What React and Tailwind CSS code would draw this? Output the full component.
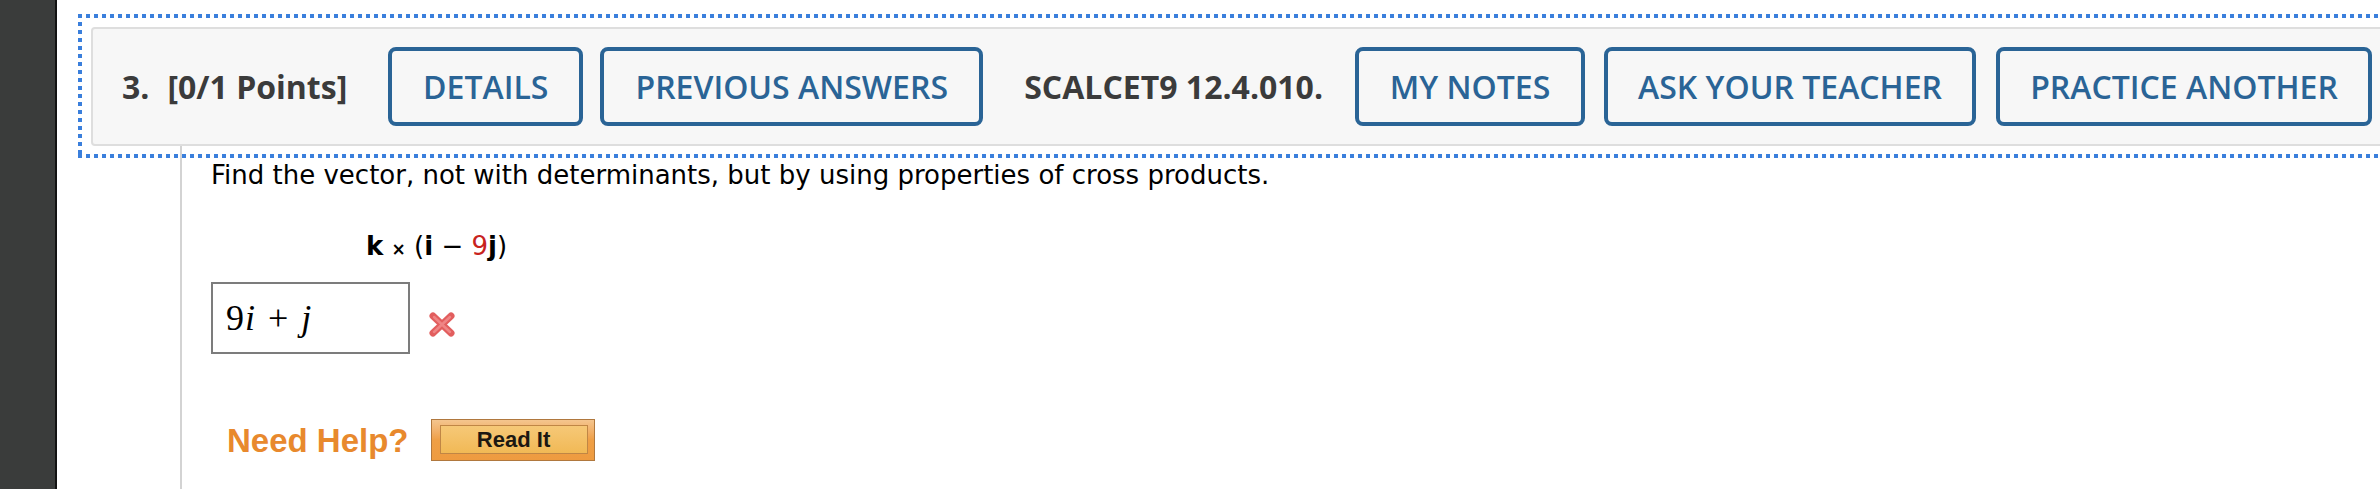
import React from 'react';

const HeaderButton = ({ label, className }) => (
  <button
    type="button"
    className={`h-[79px] shrink-0 rounded-[8px] border-4 border-[#2a6496] bg-transparent text-[32px] font-semibold text-[#2a6496] ${className}`}
  >
    {label}
  </button>
);

const WrongMark = () => (
  <svg width="28" height="25" viewBox="0 0 28 25" className="shrink-0">
    <path d="M5 4 L23 21 M23 4 L5 21" stroke="#e25e5e" strokeWidth="7" strokeLinecap="round" />
    <path d="M6 5 L22 20 M22 5 L6 20" stroke="#ef8585" strokeWidth="2.5" strokeLinecap="round" />
  </svg>
);

const ReadItButton = () => (
  <div className="h-[42px] w-[164px] border border-[#b0783e] bg-gradient-to-b from-[#f4c58e] via-[#ef9f45] to-[#ee9b40] pt-[5px] pl-[8px] pr-[6px] pb-[6px]">
    <div className="flex h-full items-center justify-center border-[1.5px] border-[#c08645] bg-gradient-to-b from-[#f6c877] to-[#f1b955]">
      <span className="font-['Liberation_Sans',Arial,sans-serif] text-[22px] font-bold leading-none text-[#1c1812]">
        Read It
      </span>
    </div>
  </div>
);

export default function App() {
  return (
    <div className="flex h-[489px] w-[2380px] overflow-hidden bg-white">
      <div className="h-full w-[57px] shrink-0 border-r-2 border-[#121212] bg-[#3a3c3b]" />

      <div className="flex min-w-0 flex-1 flex-col pl-[21px] pt-[14px]">
        {/* focus frame (square dots) around the question header */}
        <div className="relative z-10 w-max shrink-0 pt-[13px] pl-[13px] pb-[12px] [background:linear-gradient(90deg,#3a7fdc_50%,transparent_0)_left_top/8px_4px_repeat-x,linear-gradient(90deg,#3a7fdc_50%,transparent_0)_left_bottom/8px_4px_repeat-x,linear-gradient(#3a7fdc_50%,transparent_0)_left_top/4px_8px_repeat-y]">
          <div className="flex h-[119px] w-max items-center rounded-[4px] border-2 border-[#dedede] bg-[#f7f7f7] pl-[29px] pr-[40px] font-['Open_Sans',sans-serif]">
            <span className="text-[32px] font-bold text-[#3b3b3b]">3.</span>
            <span className="ml-[18px] text-[32px] font-bold text-[#3b3b3b]">[0/1 Points]</span>
            <HeaderButton label="DETAILS" className="ml-[41px] w-[195px]" />
            <HeaderButton label="PREVIOUS ANSWERS" className="ml-[17px] w-[383px]" />
            <span className="ml-[41px] text-[32px] font-bold text-[#3b3b3b]">SCALCET9 12.4.010.</span>
            <HeaderButton label="MY NOTES" className="ml-[32px] w-[230px]" />
            <HeaderButton label="ASK YOUR TEACHER" className="ml-[19px] w-[372px]" />
            <HeaderButton label="PRACTICE ANOTHER" className="ml-[20px] w-[376px]" />
          </div>
        </div>

        {/* question body */}
        <div className="-mt-[12px] ml-[102px] flex-1 border-l-2 border-[#d3d3d3] pl-[29px] pt-[14px] font-['DejaVu_Sans',Verdana,sans-serif] text-[26px] leading-[30px] text-black">
          <p>Find the vector, not with determinants, but by using properties of cross products.</p>

          <p className="ml-[155px] mt-[41px]">
            <b>k</b> <span className="text-[17px] font-bold">×</span> (<b>i</b> − <span className="text-[#c8231e]">9</span><b>j</b>)
          </p>

          <div className="mt-[18px] flex items-end gap-[18px]">
            <div className="flex h-[72px] w-[199px] items-center border-2 border-[#7c7c7c] bg-white pl-[13px] font-['Liberation_Serif','Times_New_Roman',serif] text-[36px] leading-none">
              <span>9</span>
              <span className="ml-[1px] italic">i</span>
              <span className="mx-[13px]">+</span>
              <span className="italic">j</span>
            </div>
            <div className="mb-[17px]">
              <WrongMark />
            </div>
          </div>

          <div className="mt-[65px] flex items-center pl-[16px]">
            <span className="font-['Liberation_Sans',Arial,sans-serif] text-[33px] font-bold leading-none text-[#e8892d]">
              Need Help?
            </span>
            <div className="ml-[22px]">
              <ReadItButton />
            </div>
          </div>
        </div>
      </div>
    </div>
  );
}
